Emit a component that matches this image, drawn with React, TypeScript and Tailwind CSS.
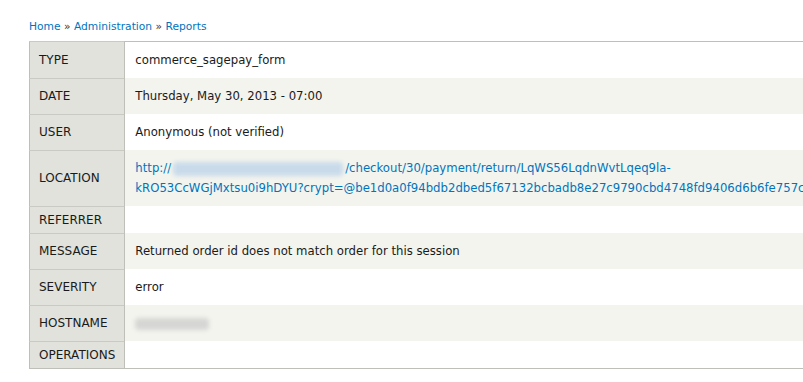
const rows: { label: string; value: React.ReactNode }[] = [
  { label: 'TYPE', value: 'commerce_sagepay_form' },
  { label: 'DATE', value: 'Thursday, May 30, 2013 - 07:00' },
  { label: 'USER', value: 'Anonymous (not verified)' },
  {
    label: 'LOCATION',
    value: (
      <span className="text-[#0074bd] whitespace-nowrap">
        http://
        <span className="inline-block align-middle w-[170px] h-[14px] mx-[2px] bg-[#c9dbea] blur-[2px] rounded-sm"></span>
        /checkout/30/payment/return/LqWS56LqdnWvtLqeq9la-
        <br />
        kRO53CcWGjMxtsu0i9hDYU?crypt=@be1d0a0f94bdb2dbed5f67132bcbadb8e27c9790cbd4748fd9406d6b6fe757c
      </span>
    ),
  },
  { label: 'REFERRER', value: '' },
  { label: 'MESSAGE', value: 'Returned order id does not match order for this session' },
  { label: 'SEVERITY', value: 'error' },
  {
    label: 'HOSTNAME',
    value: <span className="inline-block align-middle w-[74px] h-[12px] bg-[#d6d6d4] blur-[2px] rounded-sm"></span>,
  },
  { label: 'OPERATIONS', value: '' },
];

export default function App() {
  return (
    <div className="w-[803px] h-[382px] overflow-hidden bg-white font-['DejaVu_Sans',Verdana,sans-serif] text-[12px] text-[#1a1a1a]">
      {/* breadcrumb */}
      <div className="pt-[20px] pl-[29px] text-[10.7px] leading-[14px] text-[#0074bd]">
        Home <span className="text-[#333]">»</span> Administration <span className="text-[#333]">»</span> Reports
      </div>

      {/* log entry details */}
      <table className="ml-[29px] mt-[7px] w-[1000px] border-collapse border border-[#bebfb9]">
        <tbody>
          {rows.map((row, i) => (
            <tr key={row.label} className={i % 2 === 1 ? 'bg-[#f3f4ee]' : 'bg-white'}>
              <th className="w-[95px] bg-[#e1e2dc] border-t border-[#c9cac4] border-r border-r-[#bebfb9] px-[9px] py-[3px] text-left font-normal leading-[20px] whitespace-nowrap">
                {row.label}
              </th>
              <td className="px-[10px] py-[8px] text-[11.7px] leading-[20px] align-middle">{row.value}</td>
            </tr>
          ))}
        </tbody>
      </table>
    </div>
  );
}
